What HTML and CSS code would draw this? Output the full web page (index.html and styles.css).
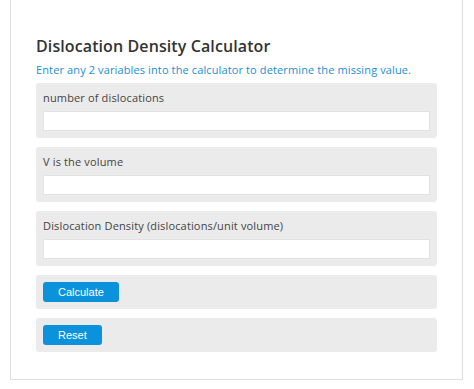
FILE: index.html
```html
<!doctype html>
<html lang="en">
<head>
  <meta charset="utf-8">
  <title>Dislocation Density Calculator</title>
  <link rel="stylesheet" href="styles.css">
</head>
<body>

<div class="calc">
  <h2 class="calc-title">Dislocation Density Calculator</h2>
  <p class="calc-intro">Enter any 2 variables into the calculator to determine the missing value.</p>

  <div class="calc-row">
    <label class="calc-label" for="n">number of dislocations</label>
    <input class="calc-field" id="n" type="text">
  </div>

  <div class="calc-row">
    <label class="calc-label" for="v">V is the volume</label>
    <input class="calc-field" id="v" type="text">
  </div>

  <div class="calc-row">
    <label class="calc-label" for="rho">Dislocation Density (dislocations/unit volume)</label>
    <input class="calc-field" id="rho" type="text">
  </div>

  <div class="calc-row calc-row-btn">
    <button class="calc-btn" type="button">Calculate</button>
  </div>

  <div class="calc-row calc-row-btn">
    <button class="calc-btn" type="button">Reset</button>
  </div>
</div>

</body>
</html>
```

FILE: styles.css
```css
html {
  background-color: #fff;
}

body {
  color: #444;
  font-family: "Open Sans", sans-serif;
  margin: 0;
  padding: 0 11px 0 10px;
}

.calc {
  border: 1px solid #dedede;
  border-top: 0;
  padding: 35px 25px 27px;
}

.calc-title {
  color: #333;
  font-size: 16px;
  font-weight: 600;
  letter-spacing: 0.1px;
  line-height: 22px;
  margin: 0 0 6px;
}

.calc-intro {
  color: #1b8fd2;
  font-size: 11px;
  letter-spacing: 0.12px;
  line-height: 14px;
  margin: 0 0 6px;
}

.calc-row {
  background-color: #ebebeb;
  border-radius: 3px;
  display: flex;
  flex-direction: column;
  align-items: flex-start;
  margin-bottom: 9px;
  padding: 7px;
}

.calc-row:last-child {
  margin-bottom: 0;
}

.calc-label {
  font-size: 11px;
  letter-spacing: 0.15px;
  line-height: 16px;
  margin-bottom: 5px;
}

.calc-field {
  align-self: stretch;
  background-color: #fff;
  border: 1px solid #e2e2e2;
  box-sizing: border-box;
  height: 20px;
  margin: 0;
  padding: 0 4px;
}

.calc-btn {
  background-color: #0b92db;
  border: 0;
  border-radius: 3px;
  color: #fff;
  font-family: "Liberation Sans", Arial, sans-serif;
  font-size: 11px;
  height: 20px;
  padding: 0 15px;
}
```
